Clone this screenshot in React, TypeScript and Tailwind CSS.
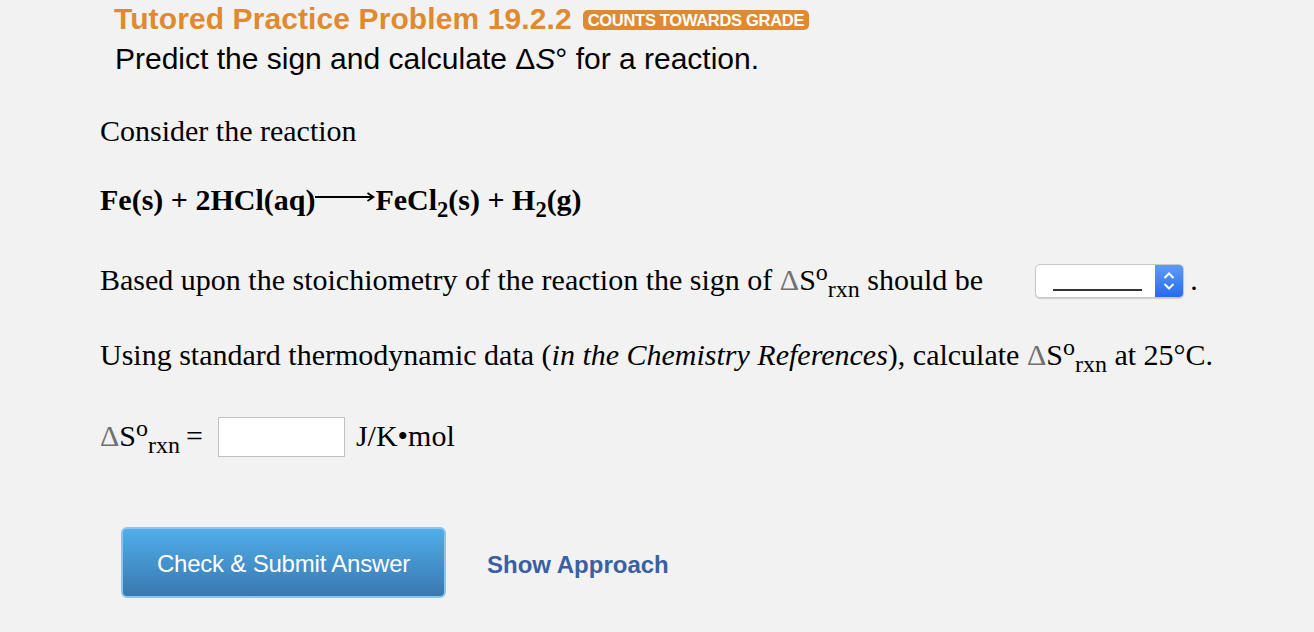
import React from "react";

const serif = { fontFamily: '"Liberation Serif", "Times New Roman", serif' };
const sans = { fontFamily: '"Liberation Sans", Arial, Helvetica, sans-serif' };

function DS() {
  return (
    <span className="whitespace-nowrap">
      <span className="text-[#707070]">Δ</span>S<span className="text-[0.8em] relative top-[-0.4em]">o</span>
      <span className="text-[0.8em] relative top-[0.3em]">rxn</span>
    </span>
  );
}

export default function App() {
  return (
    <div className="min-h-[632px] w-[1314px] bg-[#f2f2f2] text-black overflow-hidden">
      <div className="pl-[114px]" style={sans}>
        <div className="flex items-center gap-[11px] h-[36px]">
          <span className="text-[30px] font-bold text-[#e08a30] tracking-[0.1px]">Tutored Practice Problem 19.2.2</span>
          <span className="bg-[#e08a30] text-white text-[16.5px] font-bold rounded-[5px] px-[5px] leading-[20px] mt-[4px] tracking-[-0.3px]">COUNTS TOWARDS GRADE</span>
        </div>
        <div className="text-[30px] mt-[5px] leading-[36px] pl-[1px]">
          Predict the sign and calculate Δ<i>S</i>° for a reaction.
        </div>
      </div>

      <div className="pl-[100px] text-[30px]" style={serif}>
        <div className="mt-[36px] leading-[36px]">Consider the reaction</div>
        <div className="mt-[33px] leading-[36px] font-bold">
          Fe(s) + 2HCl(aq)<span className="inline-block relative top-[-7px]"><svg width="60" height="12" viewBox="0 0 60 12"><line x1="0" y1="6" x2="58" y2="6" stroke="#000" strokeWidth="1.8" /><path d="M52.5 2 L58.5 6 L52.5 10" fill="none" stroke="#000" strokeWidth="1.8" /></svg></span>FeCl<span className="text-[0.75em] relative top-[0.3em]">2</span>(s) + H<span className="text-[0.75em] relative top-[0.3em]">2</span>(g)
        </div>
        <div className="mt-[40px] flex items-center h-[36px]">
          <span>Based upon the stoichiometry of the reaction the sign of <DS /> should be</span>
          <div className="ml-[52px] mt-[4px] flex h-[34px] w-[149px] rounded-[5px] border border-[#c8c8c8] bg-white overflow-hidden shadow-[0_1px_1px_rgba(0,0,0,0.15)]">
            <div className="flex-1 flex items-end justify-center pb-[6px] pl-[4px]">
              <div className="w-[89px] border-b-[2px] border-[#333]" />
            </div>
            <div className="w-[28px] bg-gradient-to-b from-[#5e9cf7] to-[#2769f0] flex items-center justify-center">
              <svg width="14" height="24" viewBox="0 0 14 24"><path d="M2.5 9 L7 4.5 L11.5 9" fill="none" stroke="#fff" strokeWidth="2" /><path d="M2.5 15 L7 19.5 L11.5 15" fill="none" stroke="#fff" strokeWidth="2" /></svg>
            </div>
          </div>
          <span className="ml-[6px]">.</span>
        </div>
        <div className="mt-[40px] leading-[36px]">
          Using standard thermodynamic data (<i>in the Chemistry References</i>), calculate <DS /> at 25°C.
        </div>
        <div className="mt-[42px] flex items-center h-[40px]">
          <span className="relative top-[-2px]"><DS /></span>
          <span className="ml-[6px] relative top-[-2px]">=</span>
          <div className="ml-[15px] w-[127px] h-[40px] bg-white border border-[#c0c0c0]" />
          <span className="ml-[11px] relative top-[-2px]">J/K•mol</span>
        </div>
      </div>

      <div className="pl-[121px] mt-[70px] flex items-center" style={sans}>
        <button className="w-[325px] h-[71px] pt-[3px] rounded-[6px] border-[2px] border-[#8cc4ec] bg-gradient-to-b from-[#50aeea] to-[#3a78b0] text-white text-[24px] tracking-[-0.2px]">
          Check &amp; Submit Answer
        </button>
        <span className="ml-[41px] mt-[4px] text-[24px] font-bold text-[#3a5fa3]">Show Approach</span>
      </div>
    </div>
  );
}
